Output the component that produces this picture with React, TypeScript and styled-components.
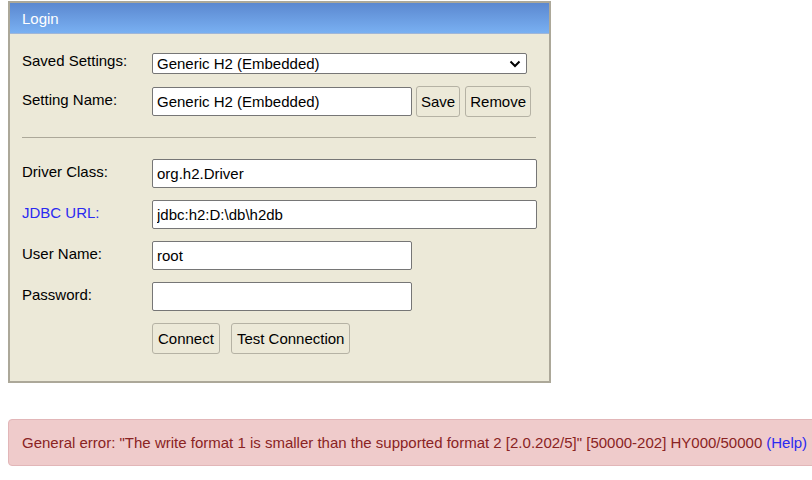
import React from "react";
import styled, { createGlobalStyle } from "styled-components";

const GlobalStyle = createGlobalStyle`
  html, body {
    margin: 0;
    padding: 0;
    background: #ffffff;
    overflow: hidden;
  }
  body {
    font-family: "Liberation Sans", Arial, sans-serif;
    font-size: 15px;
    color: #000;
  }
`;

const Page = styled.div`
  padding: 1px 0 0 8px;
`;

const Panel = styled.form`
  width: 539px;
  border: 2px solid #aca899;
  background: #ece9d8;
`;

const PanelHeader = styled.div`
  height: 30px;
  padding-left: 12px;
  display: flex;
  align-items: center;
  color: #ffffff;
  background: linear-gradient(to bottom, #5b88d0, #79b0f2);
  border-bottom: 1px solid #9fb6d8;
`;

const PanelBody = styled.div`
  padding: 18px 0 27px 12px;
  display: flex;
  flex-direction: column;
`;

const Row = styled.div<{ gap?: number }>`
  display: flex;
  align-items: center;
  margin-top: ${({ gap }) => gap ?? 0}px;
`;

const Label = styled.label<{ link?: boolean }>`
  width: 130px;
  flex: none;
  padding-bottom: 5px;
  color: ${({ link }) => (link ? "#2a2af0" : "#000")};
`;

const TextInput = styled.input<{ w: number }>`
  box-sizing: border-box;
  flex: none;
  width: ${({ w }) => w}px;
  height: 29px;
  padding: 0 4px;
  border: 1px solid #767676;
  border-radius: 2px;
  background: #fff;
  font: inherit;
  color: #000;
  outline: none;
`;

const SelectWrap = styled.div`
  position: relative;
  width: 375px;
  height: 21px;
`;

const Select = styled.select`
  box-sizing: border-box;
  appearance: none;
  width: 100%;
  height: 100%;
  padding: 0 4px;
  border: 1px solid #767676;
  border-radius: 2px;
  background: #fff;
  font: inherit;
  color: #000;
  outline: none;
`;

const Chevron = styled.svg`
  position: absolute;
  right: 6px;
  top: 5px;
  width: 12px;
  height: 12px;
  pointer-events: none;
`;

const Button = styled.button<{ pad?: number }>`
  box-sizing: border-box;
  height: 31px;
  padding: 0 ${({ pad }) => pad ?? 4}px;
  border: 1px solid #b5b2a4;
  border-radius: 3px;
  background: transparent;
  font: inherit;
  color: #000;
`;

const ButtonGroup = styled.div<{ gap: number; offset?: number }>`
  display: flex;
  gap: ${({ gap }) => gap}px;
  margin-left: ${({ offset }) => offset ?? 0}px;
`;

const Divider = styled.hr`
  margin: 20px 0 0 0;
  border: none;
  border-top: 1px solid #aca899;
  width: 514px;
`;

const ErrorBox = styled.div`
  margin: 36px 0 0 0;
  width: 840px;
  height: 45px;
  padding-left: 13px;
  display: flex;
  align-items: center;
  white-space: nowrap;
  background: #efcbcb;
  border: 1px solid #e2b6b8;
  border-radius: 4px;
  color: #8a2323;
`;

const HelpLink = styled.a`
  color: #2a2af0;
  text-decoration: none;
  margin-left: 4px;
`;

export default function App() {
  return (
    <>
      <GlobalStyle />
      <Page>
        <Panel onSubmit={(e) => e.preventDefault()}>
          <PanelHeader>Login</PanelHeader>
          <PanelBody>
            <Row>
              <Label>Saved Settings:</Label>
              <SelectWrap>
                <Select defaultValue="h2">
                  <option value="h2">Generic H2 (Embedded)</option>
                </Select>
                <Chevron viewBox="0 0 12 12">
                  <path d="M1.5 3.5 L6 8 L10.5 3.5" fill="none" stroke="#000" strokeWidth="2" />
                </Chevron>
              </SelectWrap>
            </Row>
            <Row gap={12}>
              <Label>Setting Name:</Label>
              <TextInput w={260} defaultValue="Generic H2 (Embedded)" />
              <ButtonGroup gap={5} offset={4}>
                <Button type="button">Save</Button>
                <Button type="button">Remove</Button>
              </ButtonGroup>
            </Row>
            <Divider />
            <Row gap={21}>
              <Label>Driver Class:</Label>
              <TextInput w={385} defaultValue="org.h2.Driver" />
            </Row>
            <Row gap={12}>
              <Label link>JDBC URL:</Label>
              <TextInput w={385} defaultValue="jdbc:h2:D:\db\h2db" />
            </Row>
            <Row gap={12}>
              <Label>User Name:</Label>
              <TextInput w={260} defaultValue="root" />
            </Row>
            <Row gap={12}>
              <Label>Password:</Label>
              <TextInput w={260} type="password" />
            </Row>
            <Row gap={12}>
              <Label />
              <ButtonGroup gap={11}>
                <Button type="button" pad={5}>Connect</Button>
                <Button type="button" pad={5}>Test Connection</Button>
              </ButtonGroup>
            </Row>
          </PanelBody>
        </Panel>
        <ErrorBox>
          General error: "The write format 1 is smaller than the supported format 2 [2.0.202/5]" [50000-202] HY000/50000
          <HelpLink href="#">(Help)</HelpLink>
        </ErrorBox>
      </Page>
    </>
  );
}
